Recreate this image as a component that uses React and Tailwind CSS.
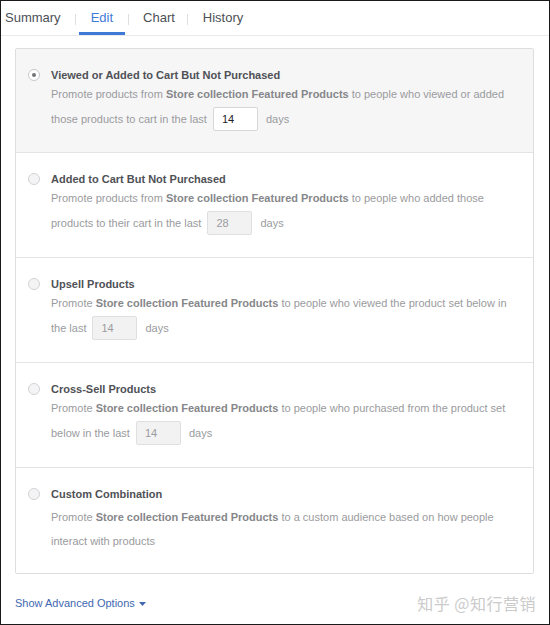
import React from "react";

function Radio({ checked }) {
  return (
    <div
      className={
        "mt-[3px] w-[12px] h-[12px] rounded-full border flex items-center justify-center shrink-0 " +
        (checked ? "border-[#c8c9cc] bg-white" : "border-[#d2d3d6] bg-[#f4f4f5]")
      }
    >
      {checked && <div className="w-[4px] h-[4px] rounded-full bg-[#737478]" />}
    </div>
  );
}

function NumBox({ value, active }) {
  return (
    <div
      className={
        "h-[24px] w-[45px] border rounded-[2px] flex items-center pl-[8px] text-[11px] " +
        (active
          ? "bg-white border-[#d6d7da] text-[#222222]"
          : "bg-[#f2f2f3] border-[#dedfe1] text-[#9b9c9f]")
      }
    >
      {value}
    </div>
  );
}

const B = ({ children }) => <span className="font-bold text-[#86878a]">{children}</span>;

function Item({ checked, title, line1, line2, input, bg, last, first, custom }) {
  return (
    <div
      className={
        "flex pl-[12px] pt-[17px] gap-[11px] " +
        (first ? "h-[104px] " : "h-[105px] ") +
        (last ? "" : "border-b border-[#e3e4e6] ") +
        (bg ? "bg-[#f6f6f7]" : "bg-white")
      }
    >
      <Radio checked={checked} />
      <div className="flex flex-col">
        <div className="h-[18px] leading-[18px] text-[11px] font-bold text-[#4f5156]">{title}</div>
        {custom ? (
          <>
            <div className="mt-[2px] h-[24px] leading-[24px] text-[11px] text-[#9a9b9e] whitespace-nowrap">{line1}</div>
            <div className="h-[24px] leading-[24px] text-[11px] text-[#9a9b9e] whitespace-nowrap">{line2}</div>
          </>
        ) : (
          <>
            <div className="h-[20px] leading-[20px] text-[11px] text-[#9a9b9e] whitespace-nowrap">{line1}</div>
            <div className="mt-[2px] h-[26px] flex items-center text-[11px] text-[#9a9b9e] whitespace-nowrap">
              <span>{line2}</span>
              <div className="ml-[6px] mr-[8px]">
                <NumBox value={input} active={checked} />
              </div>
              <span>days</span>
            </div>
          </>
        )}
      </div>
    </div>
  );
}

export default function App() {
  return (
    <div className="w-[550px] h-[625px] border border-[#1a1a1a] bg-white flex flex-col font-['Liberation_Sans',Arial,sans-serif]">
      <div className="h-[35px] border-b border-[#e9eaed] flex items-stretch shrink-0">
        <div className="pl-[4px] pr-[14px] flex items-center text-[13px] text-[#4b4f56]">Summary</div>
        <div className="w-px h-[11px] bg-[#dcdee2] self-center mt-[2px]" />
        <div className="ml-[3px] px-[12px] flex items-center text-[13px] text-[#3f7bd6] border-b-[3px] border-[#3f7bd6] pt-[3px]">
          Edit
        </div>
        <div className="ml-[3px] w-px h-[11px] bg-[#dcdee2] self-center mt-[2px]" />
        <div className="ml-[2px] px-[12px] flex items-center text-[13px] text-[#4b4f56]">Chart</div>
        <div className="w-px h-[11px] bg-[#dcdee2] self-center mt-[2px]" />
        <div className="ml-[3px] px-[12px] flex items-center text-[13px] text-[#4b4f56]">History</div>
      </div>

      <div className="mt-[12px] ml-[14px] mr-[15px] border border-[#dddee0] rounded-[2px] flex flex-col overflow-hidden">
        <Item
          first
          checked
          bg
          title="Viewed or Added to Cart But Not Purchased"
          line1={<>Promote products from <B>Store collection Featured Products</B> to people who viewed or added</>}
          line2="those products to cart in the last"
          input="14"
        />
        <Item
          title="Added to Cart But Not Purchased"
          line1={<>Promote products from <B>Store collection Featured Products</B> to people who added those</>}
          line2="products to their cart in the last"
          input="28"
        />
        <Item
          title="Upsell Products"
          line1={<>Promote <B>Store collection Featured Products</B> to people who viewed the product set below in</>}
          line2="the last"
          input="14"
        />
        <Item
          title="Cross-Sell Products"
          line1={<>Promote <B>Store collection Featured Products</B> to people who purchased from the product set</>}
          line2="below in the last"
          input="14"
        />
        <Item
          last
          custom
          title="Custom Combination"
          line1={<>Promote <B>Store collection Featured Products</B> to a custom audience based on how people</>}
          line2="interact with products"
        />
      </div>

      <div className="mt-[17px] ml-[14px] mr-[13px] flex items-center justify-between">
        <div className="flex items-center text-[11px] text-[#4267b2]">
          <span>Show Advanced Options</span>
          <svg width="7" height="4" viewBox="0 0 7 4" className="ml-[4px] mt-[1px]">
            <path d="M0 0 L7 0 L3.5 4 Z" fill="#4267b2" />
          </svg>
        </div>
        <div className="text-[16px] text-[#cbcbcb] font-['Noto_Sans_CJK_SC',sans-serif] tracking-[0.5px]">
          知乎 @知行营销
        </div>
      </div>
    </div>
  );
}
